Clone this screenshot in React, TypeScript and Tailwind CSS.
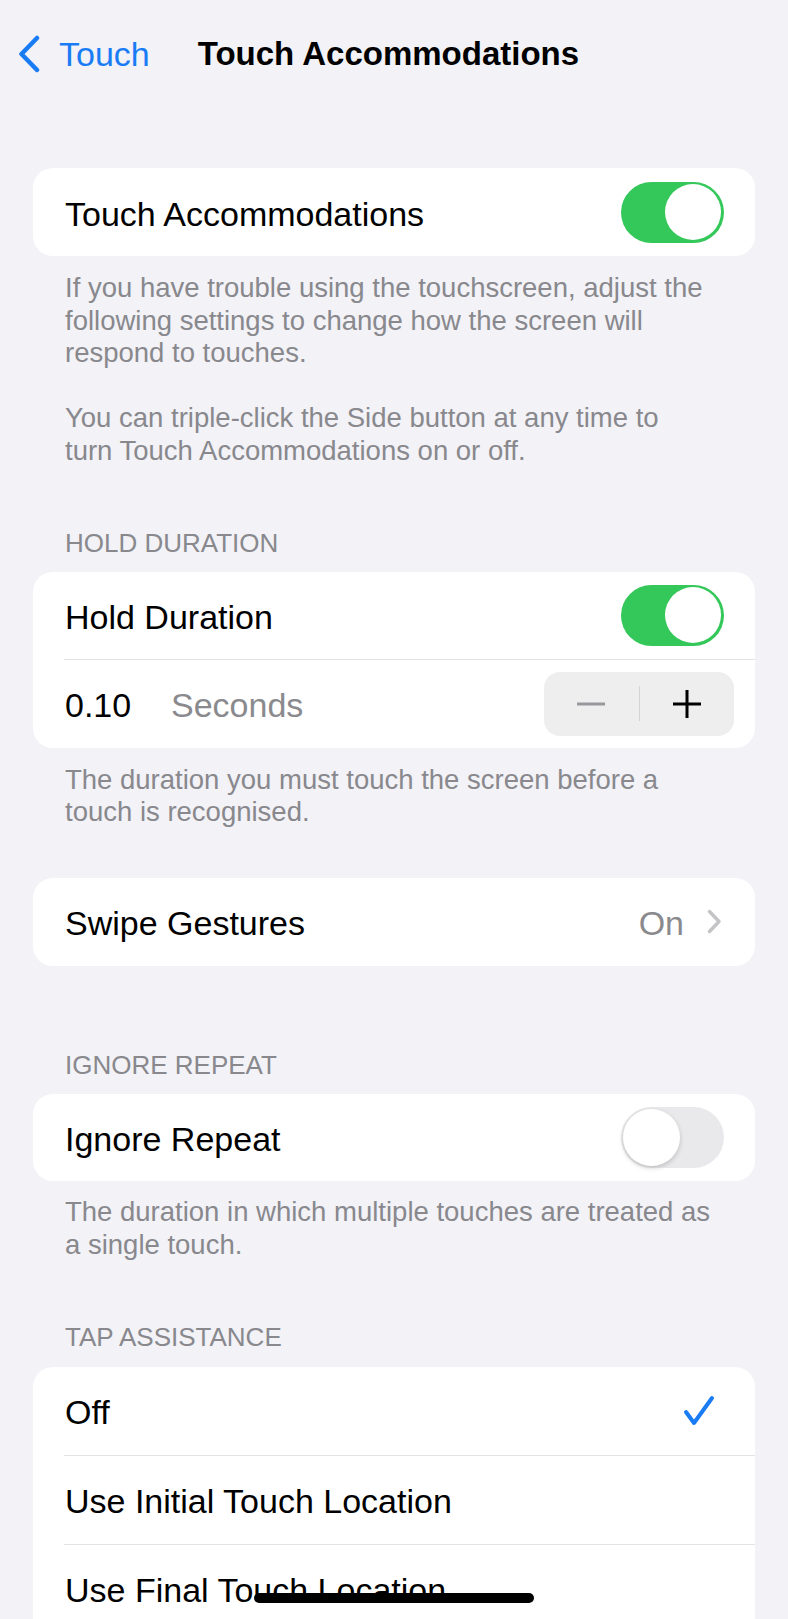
import React from 'react';

const font = { fontFamily: '"Liberation Sans", Arial, sans-serif' };

function Toggle({ on }: { on: boolean }) {
  if (on) {
    return (
      <div className="w-[103px] h-[61px] rounded-full bg-[#34c759] flex items-center justify-end pr-[3px]">
        <div className="w-[56px] h-[56px] rounded-full bg-white" />
      </div>
    );
  }
  return (
    <div className="w-[103px] h-[61px] rounded-full bg-[#e9e9eb] flex items-center pl-[2px]">
      <div className="w-[57px] h-[57px] rounded-full bg-white shadow-[0_2px_5px_rgba(0,0,0,0.18)]" />
    </div>
  );
}

function Footer({ children }: { children: React.ReactNode }) {
  return (
    <p className="pl-[65px] pr-[30px] text-[27.5px] leading-[32.5px] text-[#88888d] whitespace-nowrap">
      {children}
    </p>
  );
}

function Header({ children }: { children: string }) {
  return <p className="pl-[65px] text-[26px] leading-[32.5px] text-[#88888d] uppercase">{children}</p>;
}

function Label({ children, className = '' }: { children: React.ReactNode; className?: string }) {
  return <span className={`pt-[4px] text-[34px] ${className}`}>{children}</span>;
}

function Divider() {
  return <div className="ml-[31px] h-px bg-[#e2e2e7]" />;
}

export default function App() {
  return (
    <div style={font} className="relative w-[788px] h-[1619px] overflow-hidden bg-[#f2f2f7] text-black">
      {/* nav bar */}
      <div className="h-[108px] flex items-center">
        <svg width="24" height="38" viewBox="0 0 24 38" className="ml-[17px]">
          <path d="M20 3 L4.5 19 L20 35" fill="none" stroke="#1a7cf5" strokeWidth="4.5" strokeLinecap="round" strokeLinejoin="round" />
        </svg>
        <span className="ml-[18px] text-[34px] text-[#1a7cf5]">Touch</span>
        <span className="ml-[48px] text-[33px] font-bold">Touch Accommodations</span>
      </div>

      {/* touch accommodations */}
      <div className="mt-[60px] mx-[33px] h-[88px] rounded-[20px] bg-white pl-[32px] pr-[31px] flex items-center justify-between">
        <Label>Touch Accommodations</Label>
        <Toggle on />
      </div>
      <div className="pt-[16px]">
        <Footer>
          If you have trouble using the touchscreen, adjust the
          <br />
          following settings to change how the screen will
          <br />
          respond to touches.
          <br />
          <br />
          You can triple-click the Side button at any time to
          <br />
          turn Touch Accommodations on or off.
        </Footer>
      </div>

      {/* hold duration */}
      <div className="mt-[60px]">
        <Header>Hold Duration</Header>
      </div>
      <div className="mt-[12px] mx-[33px] rounded-[20px] bg-white">
        <div className="h-[87px] pl-[32px] pr-[31px] flex items-center justify-between">
          <Label>Hold Duration</Label>
          <Toggle on />
        </div>
        <Divider />
        <div className="h-[88px] pl-[32px] pr-[21px] flex items-center justify-between">
          <div className="flex items-center">
            <Label className="w-[106px]">0.10</Label>
            <Label className="text-[#8a8a8e]">Seconds</Label>
          </div>
          <div className="w-[190px] h-[64px] rounded-[16px] bg-[#eeeeef] flex items-center">
            <div className="flex-1 flex items-center justify-center">
              <svg width="28" height="4" viewBox="0 0 28 4">
                <line x1="0" y1="2" x2="28" y2="2" stroke="#98989d" strokeWidth="3" />
              </svg>
            </div>
            <div className="w-px h-[35px] bg-[#d4d4d8]" />
            <div className="flex-1 flex items-center justify-center">
              <svg width="28" height="28" viewBox="0 0 28 28">
                <path d="M14 0 V28 M0 14 H28" stroke="#000" strokeWidth="3" />
              </svg>
            </div>
          </div>
        </div>
      </div>
      <div className="pt-[16px]">
        <Footer>
          The duration you must touch the screen before a
          <br />
          touch is recognised.
        </Footer>
      </div>

      {/* swipe gestures */}
      <div className="mt-[49px] mx-[33px] h-[88px] rounded-[20px] bg-white pl-[32px] pr-[33px] flex items-center justify-between">
        <Label>Swipe Gestures</Label>
        <div className="flex items-center gap-[23px]">
          <Label className="text-[#8a8a8e]">On</Label>
          <svg width="15" height="25" viewBox="0 0 15 25">
            <path d="M2.5 2.5 L12 12.5 L2.5 22.5" fill="none" stroke="#c4c4c7" strokeWidth="3.5" strokeLinecap="round" strokeLinejoin="round" />
          </svg>
        </div>
      </div>

      {/* ignore repeat */}
      <div className="mt-[83px]">
        <Header>Ignore Repeat</Header>
      </div>
      <div className="mt-[13px] mx-[33px] h-[87px] rounded-[20px] bg-white pl-[32px] pr-[31px] flex items-center justify-between">
        <Label>Ignore Repeat</Label>
        <Toggle on={false} />
      </div>
      <div className="pt-[15px]">
        <Footer>
          The duration in which multiple touches are treated as
          <br />
          a single touch.
        </Footer>
      </div>

      {/* tap assistance */}
      <div className="mt-[60px]">
        <Header>Tap Assistance</Header>
      </div>
      <div className="mt-[13px] mx-[33px] rounded-t-[20px] bg-white">
        <div className="h-[88px] pl-[32px] pr-[40px] flex items-center justify-between">
          <Label>Off</Label>
          <svg width="32" height="32" viewBox="0 0 32 32">
            <path d="M3 17 L11 28 L29 3" fill="none" stroke="#1a7cf5" strokeWidth="4" strokeLinecap="round" strokeLinejoin="round" />
          </svg>
        </div>
        <Divider />
        <div className="h-[88px] pl-[32px] flex items-center">
          <Label>Use Initial Touch Location</Label>
        </div>
        <Divider />
        <div className="h-[88px] pl-[32px] flex items-center">
          <Label>Use Final Touch Location</Label>
        </div>
      </div>

      {/* home indicator */}
      <div className="absolute left-[254px] top-[1593px] w-[280px] h-[10px] rounded-full bg-black" />
    </div>
  );
}
